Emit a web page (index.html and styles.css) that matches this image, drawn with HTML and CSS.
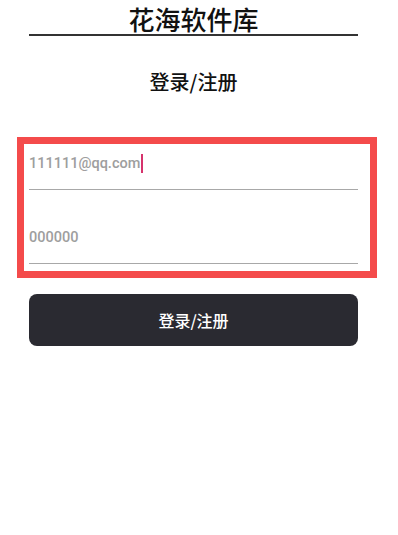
FILE: index.html
```html
<!DOCTYPE html>
<html lang="zh-CN">
<head>
    <meta charset="UTF-8">
    <meta name="viewport" content="width=device-width, initial-scale=1.0">
    <title>花海软件库</title>
    <link rel="stylesheet" href="styles.css">
</head>
<body>
    <div class="page">
        <h1 class="title">花海软件库</h1>
        <h2 class="subtitle">登录/注册</h2>
        <div class="login-form">
            <div class="field">
                <span class="field-value">111111@qq.com</span><span class="caret"></span>
            </div>
            <div class="field second">
                <span class="field-value">000000</span>
            </div>
            <div class="highlight"></div>
        </div>
        <button class="login-btn">登录/注册</button>
    </div>
</body>
</html>
```

FILE: styles.css
```css
body {
    margin: 0;
    padding: 0;
    background-color: #ffffff;
    font-family: 'Roboto', 'Noto Sans CJK SC', sans-serif;
}

.page {
    padding: 0 40px 0 29px;
}

.title {
    margin: 0;
    padding-top: 3px;
    font-family: 'Noto Sans CJK SC', sans-serif;
    font-size: 26px;
    font-weight: 500;
    line-height: 31px;
    text-align: center;
    color: #111;
    border-bottom: 2px solid #333;
}

.subtitle {
    margin: 32px 0 0;
    font-family: 'Noto Sans CJK SC', sans-serif;
    font-size: 20px;
    font-weight: 500;
    line-height: 28px;
    text-align: center;
    color: #111;
}

.login-form {
    position: relative;
    margin-top: 48px;
}

.field {
    display: flex;
    align-items: center;
    height: 20px;
    padding: 9px 0 16px;
    border-bottom: 1px solid #a8a8a8;
}

.field.second {
    margin-top: 28px;
}

.field-value {
    font-size: 14.5px;
    font-weight: 500;
    color: #9e9e9e;
}

.caret {
    width: 2px;
    height: 19px;
    margin-left: 1px;
    background-color: #d6336c;
}

.highlight {
    position: absolute;
    top: -7px;
    bottom: -14px;
    left: -12px;
    right: -19px;
    border: 7px solid #f44b4b;
    pointer-events: none;
}

.login-btn {
    display: block;
    width: 100%;
    height: 52px;
    margin-top: 30px;
    border: none;
    border-radius: 8px;
    background-color: #2a2a31;
    color: #fff;
    font-family: 'Noto Sans CJK SC', sans-serif;
    font-size: 16px;
    font-weight: 500;
    cursor: pointer;
}
```
